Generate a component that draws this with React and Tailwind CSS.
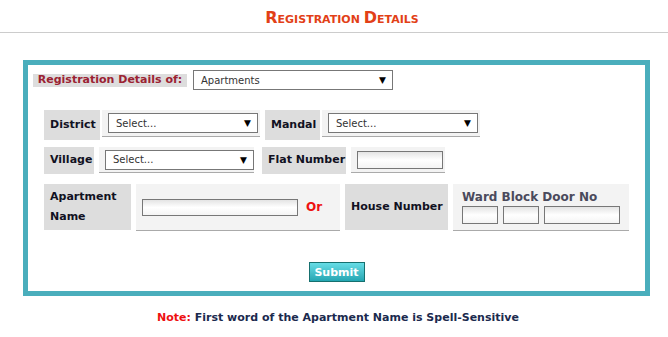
import React from "react";

const Sel = ({ w, text = "Select..." }) => (
  <div className={`relative h-[20px] ${w} border border-[#777] bg-white flex items-center pl-[7px] text-[10px] text-[#333]`}>
    <span>{text}</span>
    <span className="absolute right-[6px] top-[3px] text-[9px] text-black">▼</span>
  </div>
);

const Inp = ({ w, h = "h-[18px]" }) => (
  <div className={`${w} ${h} border border-[#777] bg-gradient-to-b from-[#e4e4e4] via-white to-[#f4f4f4]`} />
);

const Label = ({ children, className = "" }) => (
  <div className={`bg-[#dddddd] font-bold text-[11px] text-[#111122] whitespace-nowrap flex items-center px-[6px] ${className}`}>
    {children}
  </div>
);

const Cell = ({ children, className = "" }) => (
  <div className={`bg-[#f3f3f3] border-b border-[#aaaaaa] flex items-center ${className}`}>
    {children}
  </div>
);

export default function App() {
  return (
    <div className="w-[668px] h-[337px] bg-white overflow-hidden" style={{ fontFamily: '"DejaVu Sans", Verdana, sans-serif' }}>
      <div className="h-[33px] border-b border-[#cccccc] flex items-center justify-center pt-[3px] pl-[16px]">
        <h1 className="font-bold text-[#e23f17] uppercase leading-none">
          <span className="text-[16px]">R</span>
          <span className="text-[11px]">egistration </span>
          <span className="text-[16px]">D</span>
          <span className="text-[11px]">etails</span>
        </h1>
      </div>

      <div className="ml-[23px] mt-[27px] w-[627px] h-[236px] border-[5px] border-[#4aaebc] flex flex-col">
        <div className="flex items-center gap-[6px] pl-[5px] pt-[5px]">
          <div className="bg-[#dddddd] h-[13px] w-[154px] flex items-center justify-center font-bold text-[11px] text-[#9b2232]">
            Registration Details of:
          </div>
          <Sel w="w-[200px]" text="Apartments" />
        </div>

        <div className="pl-[16px] mt-[20px] flex flex-col gap-[7px]">
          <div className="flex items-start gap-[5px] h-[30px]">
            <Label className="w-[56px] h-[30px]">District</Label>
            <Cell className="w-[158px] h-[27px] pl-[6px] -ml-[3px]">
              <Sel w="w-[150px]" />
            </Cell>
            <Label className="w-[55px] h-[30px]">Mandal</Label>
            <Cell className="w-[158px] h-[27px] pl-[6px] -ml-[3px]">
              <Sel w="w-[150px]" />
            </Cell>
          </div>

          <div className="flex items-start gap-[5px] h-[27px]">
            <Label className="w-[50px] h-[27px]">Village</Label>
            <Cell className="w-[155px] h-[26px] pl-[6px]">
              <Sel w="w-[149px]" />
            </Cell>
            <Label className="w-[84px] h-[27px] ml-[3px]">Flat Number</Label>
            <Cell className="w-[94px] h-[26px] pl-[6px]">
              <Inp w="w-[86px]" />
            </Cell>
          </div>

          <div className="flex items-start gap-[5px] h-[47px] mt-[3px]">
            <Label className="w-[87px] h-[46px] leading-[20px] whitespace-normal">
              <span>Apartment<br />Name</span>
            </Label>
            <Cell className="w-[204px] h-[47px] pl-[6px] gap-[8px]">
              <Inp w="w-[156px]" h="h-[17px]" />
              <span className="text-[#ee1111] font-bold text-[12px]">Or</span>
            </Cell>
            <Label className="w-[103px] h-[46px]">House Number</Label>
            <Cell className="w-[176px] h-[47px] pl-[9px] flex-col !items-start justify-center">
              <div className="font-bold text-[12px] text-[#4a4a5c] leading-[14px]">Ward Block Door No</div>
              <div className="flex gap-[5px] mt-[2px]">
                <Inp w="w-[36px]" />
                <Inp w="w-[36px]" />
                <Inp w="w-[76px]" />
              </div>
            </Cell>
          </div>
        </div>

        <div className="flex justify-center mt-[31px]">
          <button className="w-[56px] h-[20px] border border-[#16706f] bg-gradient-to-b from-[#66dde6] to-[#23a6b2] text-white font-bold text-[11px] leading-none">
            Submit
          </button>
        </div>
      </div>

      <div className="text-center mt-[14px] pl-[8px] font-bold text-[11px] text-[#1b2a4e]">
        <span className="text-[#ee1111]">Note:</span> First word of the Apartment Name is Spell-Sensitive
      </div>
    </div>
  );
}
